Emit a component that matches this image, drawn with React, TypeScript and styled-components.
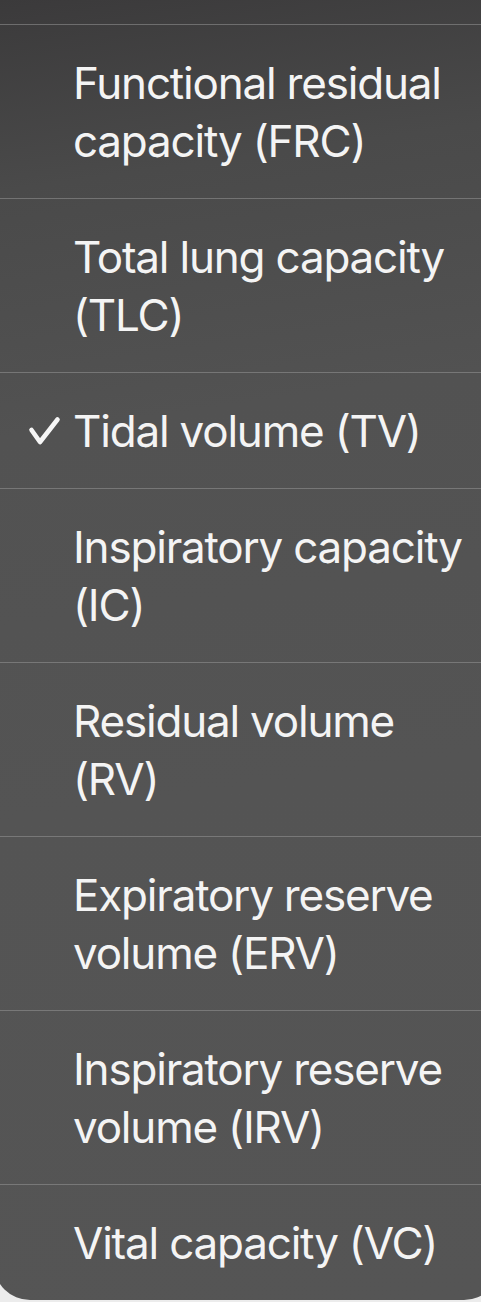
import React from "react";
import styled, { createGlobalStyle } from "styled-components";

const Global = createGlobalStyle`
  html, body {
    margin: 0;
    padding: 0;
    background: #ececec;
    overflow: hidden;
  }
  body {
    width: 481px;
    height: 1302px;
  }
`;

const Page = styled.div`
  width: 481px;
  height: 1302px;
  overflow: hidden;
`;

const Menu = styled.div`
  margin-left: -6px;
  width: 506px;
  height: 1300px;
  border-radius: 0 0 36px 36px;
  overflow: hidden;
  background: linear-gradient(
    172deg,
    #3b3a3b 0%,
    #4a4a4a 14%,
    #525252 32%,
    #545454 60%,
    #555555 100%
  );
  display: flex;
  flex-direction: column;
  font-family: Inter, "Noto Sans", "Liberation Sans", sans-serif;
  color: #f4f4f4;
`;

const TopStub = styled.div`
  height: 24px;
  flex: none;
`;

const Row = styled.div<{ $lines: number }>`
  flex: none;
  box-sizing: border-box;
  height: ${(p) => (p.$lines === 2 ? 174 : 116)}px;
  border-top: 1px solid rgba(150, 150, 150, 0.55);
  display: grid;
  grid-template-columns: 79px 1fr;
  align-items: center;
`;

const CheckCell = styled.div`
  display: flex;
  align-items: center;
  padding-left: 34px;
  height: 100%;
`;

const Label = styled.div`
  font-size: 44px;
  line-height: 58px;
  letter-spacing: -1.2px;
  font-weight: 400;
  white-space: pre;
`;

const Check = () => (
  <svg width="34" height="32" viewBox="0 0 34 32" fill="none">
    <path
      d="M3.5 15 L12 27 L29.5 4.5"
      stroke="#f6f6f6"
      strokeWidth="4.6"
      strokeLinecap="round"
      strokeLinejoin="round"
    />
  </svg>
);

const items: { text: string; lines: number; checked?: boolean }[] = [
  { text: "Functional residual\ncapacity (FRC)", lines: 2 },
  { text: "Total lung capacity\n(TLC)", lines: 2 },
  { text: "Tidal volume (TV)", lines: 1, checked: true },
  { text: "Inspiratory capacity\n(IC)", lines: 2 },
  { text: "Residual volume\n(RV)", lines: 2 },
  { text: "Expiratory reserve\nvolume (ERV)", lines: 2 },
  { text: "Inspiratory reserve\nvolume (IRV)", lines: 2 },
  { text: "Vital capacity (VC)", lines: 1 },
];

export default function App() {
  return (
    <Page>
      <Global />
      <Menu>
        <TopStub />
        {items.map((it) => (
          <Row key={it.text} $lines={it.lines}>
            <CheckCell>{it.checked ? <Check /> : null}</CheckCell>
            <Label>{it.text}</Label>
          </Row>
        ))}
      </Menu>
    </Page>
  );
}
